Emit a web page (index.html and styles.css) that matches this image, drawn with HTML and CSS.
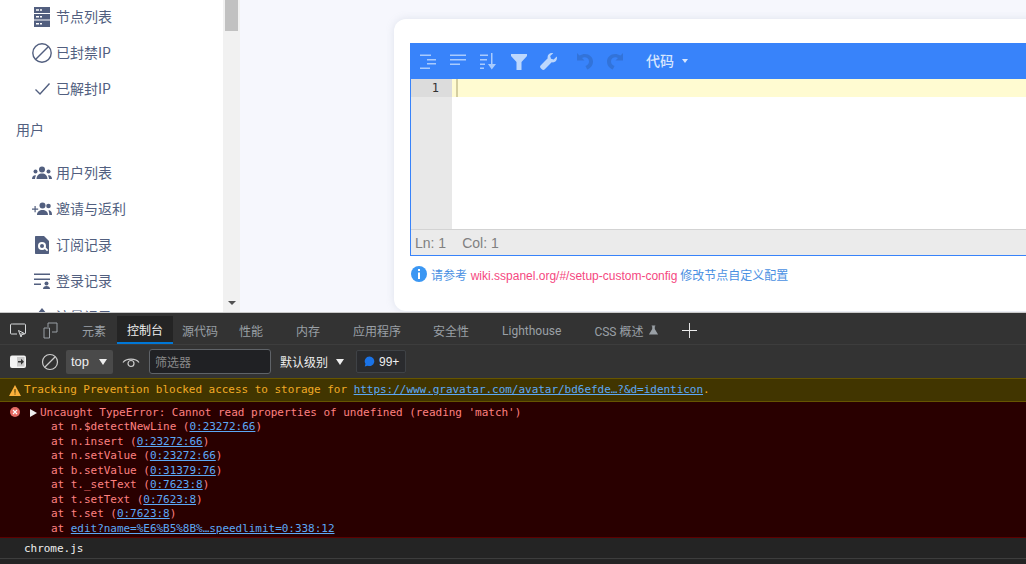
FILE: index.html
```html
<!DOCTYPE html>
<html lang="zh">
<head>
    <meta charset="UTF-8">
    <title>节点编辑</title>
    <link rel="stylesheet" href="styles.css">
</head>
<body>
    <div class="page">
        <aside class="sidebar">
            <div class="nav-row">
                <svg class="nav-icon" viewBox="0 0 20 20"><path d="M2 0h16v6H2zM2 7h16v5.500H2zM2 13.500h16V20H2z"/><path class="cut" d="M4 2.300h3v1.400H4zM8 2.300h2v1.400H8zM4 9h3v1.400H4zM8 9h2v1.400H8zM4 16h3v1.400H4zM8 16h2v1.400H8z"/></svg>
                <span>节点列表</span>
            </div>
            <div class="nav-row">
                <svg class="nav-icon" viewBox="0 0 20 20"><circle cx="10" cy="10" r="9.200" fill="none" stroke="#525f7f" stroke-width="1.400"/><path d="M3.500 16.500 16.500 3.500" fill="none" stroke="#525f7f" stroke-width="1.400"/></svg>
                <span>已封禁IP</span>
            </div>
            <div class="nav-row">
                <svg class="nav-icon" viewBox="0 0 20 20"><path d="M3.500 10.500l4.500 4.500L17.500 4.500" fill="none" stroke="#525f7f" stroke-width="1.400"/></svg>
                <span>已解封IP</span>
            </div>
            <div class="nav-title">用户</div>
            <div class="nav-row">
                <svg class="nav-icon" viewBox="0 0 20 20"><circle cx="10" cy="6.500" r="3"/><circle cx="3.500" cy="8.500" r="2"/><circle cx="16.500" cy="8.500" r="2"/><path d="M4.500 16c0-3.500 2.500-5.500 5.500-5.500s5.500 2 5.500 5.500zM0 16c0-2.500 1.300-3.800 3.300-3.800l.7.200C3.300 13.500 3 14.700 3 16zM20 16c0-2.500-1.300-3.800-3.300-3.800l-.7.200c.7 1.100 1 2.300 1 3.600z"/></svg>
                <span>用户列表</span>
            </div>
            <div class="nav-row">
                <svg class="nav-icon" viewBox="0 0 20 20"><circle cx="10.500" cy="6.500" r="3"/><circle cx="16.500" cy="7" r="2.300"/><path d="M5 16c0-3.500 2.500-5 5.500-5s5.500 1.500 5.500 5zM16.500 11.200c2.200.2 3.500 1.300 3.500 4.800h-2.700c0-1.800-.3-3.500-.8-4.800zM2.500 7h1.200v2.500h2.500v1.200H3.700v2.500H2.500v-2.500H0V9.500h2.500z"/></svg>
                <span>邀请与返利</span>
            </div>
            <div class="nav-row">
                <svg class="nav-icon" viewBox="0 0 20 20"><path d="M4 1h8l5 5v12c0 .6-.4 1-1 1H4c-.6 0-1-.4-1-1V2c0-.6.4-1 1-1z"/><circle class="cut" cx="10" cy="11" r="4"/><circle cx="10" cy="11" r="2"/><path class="cut" d="M12.300 13.500l1.200-1.200 2.700 2.700-1.200 1.200z"/></svg>
                <span>订阅记录</span>
            </div>
            <div class="nav-row">
                <svg class="nav-icon" viewBox="0 0 20 20"><path d="M2 2.500h16v1.500H2zM2 7.500h16V9H2zM2 12.500h7V14H2z"/><circle cx="14.500" cy="12.500" r="2"/><path d="M11 18c0-2 1.500-3 3.500-3s3.500 1 3.500 3z"/></svg>
                <span>登录记录</span>
            </div>
            <div class="nav-row">
                <svg class="nav-icon" viewBox="0 0 20 20"><path d="M10 1l5 6h-3v6H8V7H5z"/></svg>
                <span>流量记录</span>
            </div>
        </aside>
        <div class="side-scroll">
            <div class="side-thumb"></div>
            <div class="side-arrow"></div>
        </div>
        <main class="content">
            <section class="card">
                <div class="editor">
                    <div class="editor-menu">
                        <svg class="menu-icon" viewBox="0 0 17 17"><path d="M1 1.500h11V3H1zM8 6h9v1.500H8zM8 10h9v1.500H8zM1 14.500h10V16H1z"/></svg>
                        <svg class="menu-icon" viewBox="0 0 17 17"><path d="M0 1.500h16V3H0zM0 6h16v1.500H0zM0 10.500h10V12H0z"/></svg>
                        <svg class="menu-icon" viewBox="0 0 17 17"><path d="M0 1.500h8V3H0zM0 6h7v1.500H0zM0 10.500h5V12H0zM0 14.500h4V16H0zM11 0h1.500v11H16l-4.250 5.500L8 11h3z"/></svg>
                        <svg class="menu-icon solid" viewBox="0 0 17 17"><path d="M0 1h16v2l-5.500 6v8h-5V9L0 3z"/></svg>
                        <svg class="menu-icon solid wrench" viewBox="0 0 17 17"><path d="M12 0C9 0 7 2.500 7.700 5.300L.8 12.200c-1 1-1 2 0 3l1 1c1 1 2 1 3 0l6.900-6.900C14.500 10 17 8 17 5c0-.6-.1-1-.3-1.500l-3 3-2.700-.8-.8-2.700 3-2.700C12.800.1 12.500 0 12 0z"/></svg>
                        <svg class="menu-icon dim undo" viewBox="0 0 17 17"><path d="M1 0v7.500h7.500L6 5c2.500-1.500 7-.5 7 3.500 0 2-1.300 3.700-3.500 4.500l1.700 3.500C14.700 15.200 17 12.200 17 8.500 17 2.500 10 -1.500 3.500 2.500z"/></svg>
                        <svg class="menu-icon dim" viewBox="0 0 17 17"><path d="M16 0v7.500H8.500L11 5C8.500 3.500 4 4.500 4 8.500c0 2 1.300 3.700 3.500 4.500l-1.700 3.500C2.300 15.200 0 12.200 0 8.500 0 2.500 7 -1.500 13.500 2.500z"/></svg>
                        <span class="mode">代码<i class="mode-caret"></i></span>
                    </div>
                    <div class="editor-body">
                        <div class="gutter"><div class="gutter-line">1</div></div>
                        <div class="code"><div class="code-line"><i class="cursor"></i></div></div>
                    </div>
                    <div class="statusbar"><span>Ln: 1</span><span>Col: 1</span></div>
                </div>
                <p class="hint">
                    <svg class="hint-icon" viewBox="0 0 16 16"><circle cx="8" cy="8" r="8" fill="#3b97f3"/><path d="M7 3h2v2H7zM7 6.500h2V13H7z" fill="#fff"/></svg>
                    <span>请参考 <a class="hint-link">wiki.sspanel.org/#/setup-custom-config</a> 修改节点自定义配置</span>
                </p>
            </section>
        </main>
    </div>
    <div class="devtools">
        <div class="dt-tabs">
            <svg class="dt-icon" viewBox="0 0 18 18"><path d="M3.500 3h12c.8 0 1 .5 1 1v8c0 .6-.3 1-1 1H11M8 13H2.500c-.8 0-1-.4-1-1V4c0-.6.4-1 1-1h1" fill="none" stroke="#d8dadc" stroke-width="1"/><path d="M9.500 9.500l6 3-2.500 1-1 2.500z" fill="none" stroke="#d8dadc"/></svg>
            <svg class="dt-icon dt-device" viewBox="0 0 18 18"><path d="M3 7h5.500v10H3zM7 6V2h9v9h-5" fill="none" stroke="#9aa0a6"/></svg>
            <span class="tab first">元素</span>
            <span class="tab active">控制台</span>
            <span class="tab">源代码</span>
            <span class="tab perf">性能</span>
            <span class="tab wide">内存</span>
            <span class="tab">应用程序</span>
            <span class="tab wide sec">安全性</span>
            <span class="tab latin">Lighthouse</span>
            <span class="tab wide css-tab">CSS 概述
                <svg class="flask" viewBox="0 0 12 12"><path d="M4 1h4v1h-.6v3L11 11H1l3.600-6V2H4z" fill="#9aa0a6"/></svg>
            </span>
            <svg class="dt-plus" viewBox="0 0 16 16"><path d="M7.500 0h1v7.500H16v1H8.500V16h-1V8.500H0v-1h7.500z" fill="#eee"/></svg>
        </div>
        <div class="dt-bar">
            <svg class="dt-icon" viewBox="0 0 18 18"><rect x="1" y="2.500" width="16" height="12.500" rx="2" fill="#f2f2f2"/><rect x="8" y="4" width="7.500" height="9.500" fill="#c8c8c8"/><path d="M9 8h3V5.800L15 8.800l-3 3V9.600H9z" fill="#333"/></svg>
            <svg class="dt-icon dt-clear" viewBox="0 0 18 18"><circle cx="9" cy="9" r="7.500" fill="none" stroke="#ccc" stroke-width="1.200"/><path d="M4 14 14 4" stroke="#ccc" stroke-width="1.200"/></svg>
            <div class="ctx">top<i class="caret"></i></div>
            <svg class="dt-icon dt-eye" viewBox="0 0 18 18"><path d="M1 9.500C4 5 14 5 17 9.500" fill="none" stroke="#ccc" stroke-width="1.200"/><circle cx="9" cy="10.500" r="3" fill="none" stroke="#ccc" stroke-width="1.200"/></svg>
            <div class="filter">筛选器</div>
            <div class="level">默认级别<i class="caret"></i></div>
            <div class="issues">
                <svg class="issue-icon" viewBox="0 0 12 12"><path d="M6 .5a5.200 5.200 0 1 1-2 10L.8 11.500l.8-3A5.200 5.200 0 0 1 6 .5z" fill="#1a73e8"/></svg>
                <span>99+</span>
            </div>
        </div>
        <div class="msg warn">
            <svg class="warn-icon" viewBox="0 0 12 11"><path d="M6 0l6 11H0z" fill="#fcb03b"/><path d="M5.500 4h1v3.800h-1zM5.500 8.500h1v1h-1z" fill="#3a2e00"/></svg>
            <span>Tracking Prevention blocked access to storage for <a>https://www.gravatar.com/avatar/bd6efde…?&amp;d=identicon</a>.</span>
        </div>
        <div class="msg error">
            <div class="error-head">
                <svg class="err-icon" viewBox="0 0 10 10"><circle cx="5" cy="5" r="5" fill="#e46962"/><path d="M3 3l4 4M7 3l-4 4" stroke="#fff" stroke-width="1.100"/></svg>
                <i class="tri"></i>
                <span>Uncaught TypeError: Cannot read properties of undefined (reading 'match')</span>
            </div>
            <div class="stack">at n.$detectNewLine (<a>0:23272:66</a>)</div>
            <div class="stack">at n.insert (<a>0:23272:66</a>)</div>
            <div class="stack">at n.setValue (<a>0:23272:66</a>)</div>
            <div class="stack">at b.setValue (<a>0:31379:76</a>)</div>
            <div class="stack">at t._setText (<a>0:7623:8</a>)</div>
            <div class="stack">at t.setText (<a>0:7623:8</a>)</div>
            <div class="stack">at t.set (<a>0:7623:8</a>)</div>
            <div class="stack">at <a>edit?name=%E6%B5%8B%…speedlimit=0:338:12</a></div>
        </div>
        <div class="msg plain">chrome.js</div>
        <div class="prompt"></div>
    </div>
</body>
</html>
```
FILE: styles.css
```css
* {
    box-sizing: border-box;
}

html, body {
    margin: 0;
    height: 100%;
    overflow: hidden;
}

body {
    font-family: "Noto Sans CJK SC", "Liberation Sans", sans-serif;
    display: flex;
    flex-direction: column;
    background: #333;
}

/* page above devtools */
.page {
    display: flex;
    height: 312px;
    flex: none;
    background: #f6f7fd;
    overflow: hidden;
}

.sidebar {
    width: 223px;
    flex: none;
    background: #fff;
    overflow: hidden;
    color: #525f7f;
    font-size: 14px;
}

.nav-row {
    height: 36px;
    display: flex;
    align-items: center;
    padding-left: 32px;
    gap: 4px;
}

.nav-row:first-child {
    margin-top: -1px;
}

.nav-row span {
    padding-bottom: 3px;
}

.nav-icon {
    width: 20px;
    height: 20px;
    fill: #525f7f;
    flex: none;
}

.cut {
    fill: #fff;
}

.nav-title {
    height: 48px;
    line-height: 45px;
    padding-left: 16px;
    color: #525f7f;
    font-size: 14px;
}

.side-scroll {
    width: 17px;
    flex: none;
    background: #f1f1f1;
    position: relative;
}

.side-thumb {
    height: 31px;
    margin: 0 2px;
    background: #c1c1c1;
}

.side-arrow {
    position: absolute;
    left: 5px;
    bottom: 7px;
    border-left: 4px solid transparent;
    border-right: 4px solid transparent;
    border-top: 4px solid #505050;
}

.content {
    flex: 1;
    padding: 19px 0 0 154px;
    min-width: 0;
}

.card {
    width: 700px;
    height: 292px;
    background: #fff;
    border-radius: 12px;
    padding: 24px 16px;
    box-shadow: 0 0 8px rgba(136, 152, 170, .2);
}

/* json editor */
.editor {
    height: 213px;
    border: 1px solid #3883fa;
    display: flex;
    flex-direction: column;
}

.editor-menu {
    height: 35px;
    flex: none;
    background: #3883fa;
    display: flex;
    align-items: center;
    padding-left: 8px;
    gap: 13.500px;
}

.menu-icon {
    width: 17px;
    height: 17px;
    fill: #a9cbfd;
    flex: none;
}

.menu-icon.solid {
    fill: #bcd7fd;
}

.menu-icon.wrench {
    margin-left: -1.500px;
}

.menu-icon.dim {
    fill: #3273d9;
}

.menu-icon.undo {
    margin-left: 6px;
}

.mode {
    margin-left: 9px;
    color: #d7e6fe;
    font-size: 14px;
    font-weight: 500;
    display: flex;
    align-items: center;
    padding-bottom: 4px;
}

.mode-caret {
    margin: 2px 0 0 8px;
    border-left: 3px solid transparent;
    border-right: 3px solid transparent;
    border-top: 4px solid #d7e6fe;
}

.editor-body {
    flex: 1;
    display: flex;
    min-height: 0;
}

.gutter {
    width: 41px;
    flex: none;
    background: #e8e8e8;
}

.gutter-line {
    height: 18px;
    background: #dcdcdc;
    padding-right: 13px;
    text-align: right;
    color: #333;
    font: 12px/18px "DejaVu Sans Mono", monospace;
}

.code {
    flex: 1;
}

.code-line {
    height: 18px;
    background: #fffbd1;
    padding-left: 4px;
}

.cursor {
    display: block;
    width: 2px;
    height: 18px;
    background: #d5cfa0;
}

.statusbar {
    height: 26px;
    flex: none;
    background: #ebebeb;
    border-top: 1px solid #d3d3d3;
    color: #808080;
    font: 14px/27px "Liberation Sans", sans-serif;
    padding-left: 4px;
    display: flex;
    gap: 16px;
}

.hint {
    margin: 9px 0 0 1px;
    height: 18px;
    display: flex;
    align-items: center;
    gap: 4px;
    color: #4a90e2;
    font-size: 12px;
    white-space: nowrap;
}

.hint-icon {
    width: 16px;
    height: 16px;
    flex: none;
}

.hint-link {
    margin-left: 1px;
    color: #f5487f;
    font-family: "Liberation Sans", sans-serif;
}

/* devtools */
.devtools {
    flex: 1;
    min-height: 0;
    border-top: 1px solid #c9c9c9;
    color: #eee;
    overflow: hidden;
}

.dt-tabs {
    height: 32px;
    padding-top: 3px;
    display: flex;
    align-items: stretch;
    background: #333;
    border-bottom: 1px solid #3d3d3d;
    font: 12px Roboto, "Noto Sans CJK SC", sans-serif;
    color: #9aa0a6;
}

.dt-icon {
    width: 18px;
    height: 18px;
    flex: none;
    align-self: center;
    margin-left: 9px;
}

.dt-device {
    margin-left: 14px;
}

.tab {
    padding: 0 10px;
    display: flex;
    align-items: center;
    white-space: nowrap;
}

.tab.first {
    margin-left: 13px;
}

.tab.wide {
    padding: 0 23px;
}

.tab.active {
    margin: 0 -1px 0 1px;
    background: #242424;
    color: #eee;
    border-bottom: 2px solid #0077d6;
}

.tab.perf {
    margin-left: 1px;
}

.tab.sec {
    padding-left: 22px;
}

.tab.latin {
    padding-top: 2px;
}

.flask {
    width: 11px;
    height: 12px;
    margin-left: 5px;
}

.css-tab {
    padding-right: 27px;
}

.dt-plus {
    width: 15px;
    height: 15px;
    align-self: center;
}

.dt-bar {
    height: 33px;
    display: flex;
    align-items: center;
    background: #333;
    font-size: 12px;
}

.dt-clear {
    margin-left: 14px;
}

.ctx {
    margin-left: 7px;
    width: 47px;
    height: 24px;
    background: #4a4a4a;
    border-radius: 2px;
    display: flex;
    align-items: center;
    padding-left: 5px;
    gap: 10px;
    font: 13px "Liberation Sans", sans-serif;
}

.caret {
    border-left: 4px solid transparent;
    border-right: 4px solid transparent;
    border-top: 6px solid #eee;
}

.dt-eye {
    margin-left: 9px;
}

.filter {
    margin-left: 9px;
    width: 122px;
    height: 25px;
    line-height: 24px;
    background: #202124;
    border: 1px solid #5f6368;
    border-radius: 3px;
    padding-left: 5px;
    color: #888;
}

.level {
    margin-left: 9px;
    width: 76px;
    display: flex;
    align-items: center;
    gap: 8px;
    white-space: nowrap;
}

.issues {
    width: 50px;
    height: 23px;
    background: #2a2b2e;
    border: 1px solid #3f4246;
    border-radius: 2px;
    display: flex;
    align-items: center;
    padding-left: 7px;
    gap: 4px;
    font: 12px "Liberation Sans", sans-serif;
}

.issue-icon {
    width: 11px;
    height: 11px;
}

.msg {
    font: 11px/14px "DejaVu Sans Mono", monospace;
    letter-spacing: -.03px;
    white-space: nowrap;
}

.msg a {
    color: #5ca8f5;
    text-decoration: underline;
}

.warn {
    height: 24px;
    background: #413500;
    border-top: 1px solid #665500;
    border-bottom: 1px solid #665500;
    color: #f2ab26;
    display: flex;
    align-items: center;
    padding-left: 9px;
    gap: 3px;
}

.warn-icon {
    width: 12px;
    height: 11px;
}

.error {
    background: #290000;
    border-bottom: 1px solid #5c0000;
    color: #ff8080;
    height: 136px;
    padding-top: 3px;
}

.error-head {
    display: flex;
    align-items: center;
    height: 15px;
    padding-left: 10px;
}

.err-icon {
    width: 10px;
    height: 10px;
    margin-top: -2px;
}

.tri {
    margin: 0 3px 0 10px;
    border-top: 4px solid transparent;
    border-bottom: 4px solid transparent;
    border-left: 7px solid #eee;
}

.stack {
    padding-left: 51px;
    height: 14.500px;
    line-height: 14.500px;
}

.plain {
    height: 21px;
    line-height: 21px;
    padding-left: 24px;
    background: #242424;
    border-bottom: 1px solid #3d3d3d;
    color: #eee;
}

.prompt {
    height: 6px;
    background: #242424;
}
```
